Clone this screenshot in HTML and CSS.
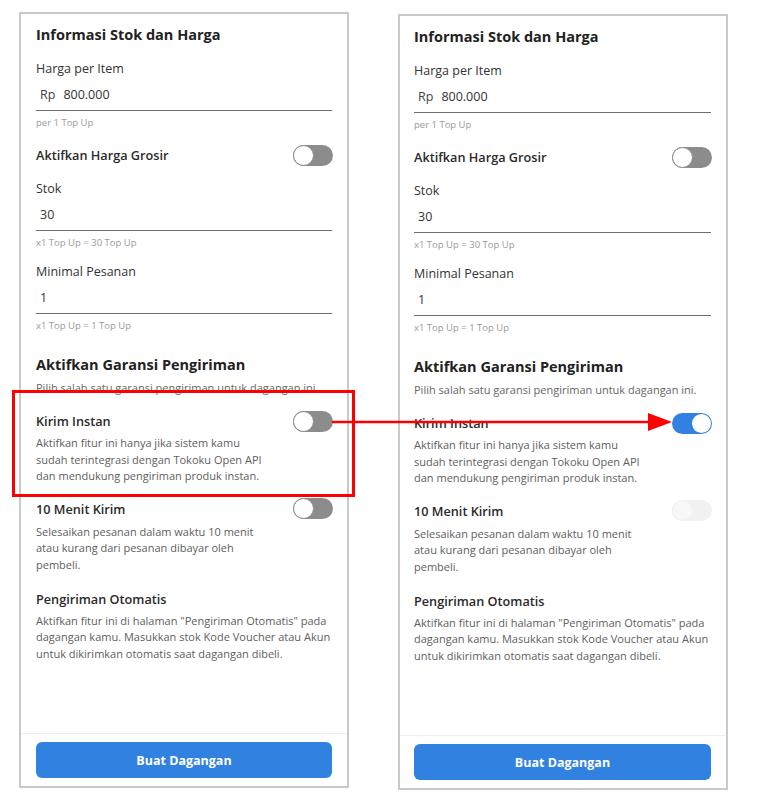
FILE: index.html
```
<!DOCTYPE html>
<html>
<head>
    <link rel="stylesheet" href="styles.css">
</head>
<body>
    <div class="screens">
        <div class="panel">
            <div class="panel-body">
                <h2 class="section-title">Informasi Stok dan Harga</h2>

                <p class="field-label">Harga per Item</p>
                <div class="field-input"><span class="prefix">Rp</span>800.000</div>
                <p class="field-hint">per 1 Top Up</p>

                <div class="toggle-row grosir">
                    <span class="toggle-title">Aktifkan Harga Grosir</span>
                    <span class="toggle"></span>
                </div>

                <p class="field-label stok">Stok</p>
                <div class="field-input">30</div>
                <p class="field-hint">x1 Top Up = 30 Top Up</p>

                <p class="field-label minimal">Minimal Pesanan</p>
                <div class="field-input">1</div>
                <p class="field-hint">x1 Top Up = 1 Top Up</p>

                <h2 class="section-title garansi">Aktifkan Garansi Pengiriman</h2>
                <p class="section-sub">Pilih salah satu garansi pengiriman untuk dagangan ini.</p>

                <div class="toggle-row kirim">
                    <span class="toggle-title">Kirim Instan</span>
                    <span class="toggle"></span>
                </div>
                <p class="option-desc">Aktifkan fitur ini hanya jika sistem kamu<br>sudah terintegrasi dengan Tokoku Open API<br>dan mendukung pengiriman produk instan.</p>

                <div class="toggle-row menit">
                    <span class="toggle-title">10 Menit Kirim</span>
                    <span class="toggle"></span>
                </div>
                <p class="option-desc desc-menit">Selesaikan pesanan dalam waktu 10 menit<br>atau kurang dari pesanan dibayar oleh<br>pembeli.</p>

                <p class="option-title">Pengiriman Otomatis</p>
                <p class="option-desc desc-auto">Aktifkan fitur ini di halaman "Pengiriman Otomatis" pada<br>dagangan kamu. Masukkan stok Kode Voucher atau Akun<br>untuk dikirimkan otomatis saat dagangan dibeli.</p>
            </div>
            <div class="panel-footer">
                <button class="btn-primary">Buat Dagangan</button>
            </div>
        </div>

        <div class="panel panel-after">
            <div class="panel-body">
                <h2 class="section-title">Informasi Stok dan Harga</h2>

                <p class="field-label">Harga per Item</p>
                <div class="field-input"><span class="prefix">Rp</span>800.000</div>
                <p class="field-hint">per 1 Top Up</p>

                <div class="toggle-row grosir">
                    <span class="toggle-title">Aktifkan Harga Grosir</span>
                    <span class="toggle"></span>
                </div>

                <p class="field-label stok">Stok</p>
                <div class="field-input">30</div>
                <p class="field-hint">x1 Top Up = 30 Top Up</p>

                <p class="field-label minimal">Minimal Pesanan</p>
                <div class="field-input">1</div>
                <p class="field-hint">x1 Top Up = 1 Top Up</p>

                <h2 class="section-title garansi">Aktifkan Garansi Pengiriman</h2>
                <p class="section-sub">Pilih salah satu garansi pengiriman untuk dagangan ini.</p>

                <div class="toggle-row kirim">
                    <span class="toggle-title">Kirim Instan</span>
                    <span class="toggle on"></span>
                </div>
                <p class="option-desc">Aktifkan fitur ini hanya jika sistem kamu<br>sudah terintegrasi dengan Tokoku Open API<br>dan mendukung pengiriman produk instan.</p>

                <div class="toggle-row menit">
                    <span class="toggle-title">10 Menit Kirim</span>
                    <span class="toggle disabled"></span>
                </div>
                <p class="option-desc desc-menit">Selesaikan pesanan dalam waktu 10 menit<br>atau kurang dari pesanan dibayar oleh<br>pembeli.</p>

                <p class="option-title">Pengiriman Otomatis</p>
                <p class="option-desc desc-auto">Aktifkan fitur ini di halaman "Pengiriman Otomatis" pada<br>dagangan kamu. Masukkan stok Kode Voucher atau Akun<br>untuk dikirimkan otomatis saat dagangan dibeli.</p>
            </div>
            <div class="panel-footer">
                <button class="btn-primary">Buat Dagangan</button>
            </div>
        </div>
    </div>

    <!-- annotation overlay -->
    <div class="highlight-box"></div>
    <svg class="arrow" width="345" height="24" viewBox="0 0 345 24">
        <line x1="0" y1="11" x2="320" y2="11" stroke="#ff0000" stroke-width="2.5"/>
        <polygon points="316,2 340,11 316,20" fill="#ff0000"/>
    </svg>
</body>
</html>
```

FILE: styles.css
```
body {
    margin: 0;
    background-color: #FFFFFF;
    font-family: "Open Sans", "Noto Sans", sans-serif;
    color: #333333;
    position: relative;
    width: 757px;
    height: 803px;
    overflow: hidden;
}
p, h2 {
    margin: 0;
}
.screens {
    display: flex;
    gap: 49px;
    padding: 12px 0 0 19px;
    align-items: flex-start;
}
.panel {
    width: 330px;
    height: 776px;
    box-sizing: border-box;
    border: 2px solid #C9C9C9;
    display: flex;
    flex-direction: column;
    background: #FFFFFF;
}
.panel-after {
    margin-top: 2px;
}
.panel-body {
    flex: 1;
    padding: 11px 15px 0 15px;
}
.panel-after .panel-body {
    padding-left: 14px;
}
.section-title {
    font-size: 14.5px;
    font-weight: 700;
    line-height: 20px;
    color: #222222;
}
.section-title.garansi {
    margin-top: 22px;
}
.section-sub {
    font-size: 11px;
    line-height: 16px;
    color: #666666;
    margin-top: 5px;
}
.field-label {
    font-size: 12.5px;
    line-height: 18px;
    margin-top: 15px;
    color: #333333;
}
.field-label.stok {
    margin-top: 14px;
}
.field-label.minimal {
    margin-top: 13px;
}
.field-input {
    margin-top: 8px;
    font-size: 12.5px;
    line-height: 18px;
    padding: 0 0 6px 4px;
    border-bottom: 1px solid #6F6F6F;
    color: #333333;
}
.prefix {
    margin-right: 8px;
    color: #444444;
}
.field-hint {
    margin-top: 5px;
    font-size: 9.5px;
    line-height: 14px;
    color: #9A9A9A;
}
.toggle-row {
    display: flex;
    justify-content: space-between;
    align-items: center;
    height: 22px;
}
.toggle-row.grosir {
    margin-top: 14px;
}
.toggle-row.kirim {
    margin-top: 14px;
}
.toggle-row.menit {
    margin-top: 13px;
}
.toggle-title,
.option-title {
    font-size: 12.7px;
    font-weight: 600;
    line-height: 18px;
    color: #2A2A2A;
}
.option-title {
    margin-top: 16px;
}
.option-desc {
    font-size: 11px;
    line-height: 16.6px;
    color: #606060;
    margin-top: 3px;
}
.option-desc.desc-menit {
    margin-top: 4px;
}
.option-desc.desc-auto {
    margin-top: 5px;
}
.toggle {
    position: relative;
    width: 40px;
    height: 21px;
    border-radius: 11px;
    background: #8C8C8C;
    margin-right: -1px;
}
.toggle::after {
    content: "";
    position: absolute;
    left: 0;
    top: 0;
    width: 19px;
    height: 19px;
    border-radius: 50%;
    background: #FFFFFF;
    border: 1px solid #8C8C8C;
}
.toggle.on {
    background: #3181E0;
}
.toggle.on::after {
    left: auto;
    right: 1px;
    top: 1px;
    width: 19px;
    height: 19px;
    border: none;
}
.toggle.disabled {
    background: #F1F1F1;
}
.toggle.disabled::after {
    background: #F8F8F8;
    border-color: #F1F1F1;
}
.panel-footer {
    border-top: 1px solid #EEEEEE;
    padding: 8px 15px 8px 15px;
}
.panel-after .panel-footer {
    padding-left: 14px;
}
.btn-primary {
    display: block;
    width: 100%;
    height: 36px;
    border: none;
    border-radius: 6px;
    background: #3181E0;
    color: #FFFFFF;
    font-family: "Open Sans", "Noto Sans", sans-serif;
    font-size: 12.5px;
    font-weight: 700;
}
.highlight-box {
    position: absolute;
    left: 12px;
    top: 390px;
    width: 343px;
    height: 107px;
    box-sizing: border-box;
    border: 3px solid #FF0000;
}
.arrow {
    position: absolute;
    left: 332px;
    top: 411px;
}
```
